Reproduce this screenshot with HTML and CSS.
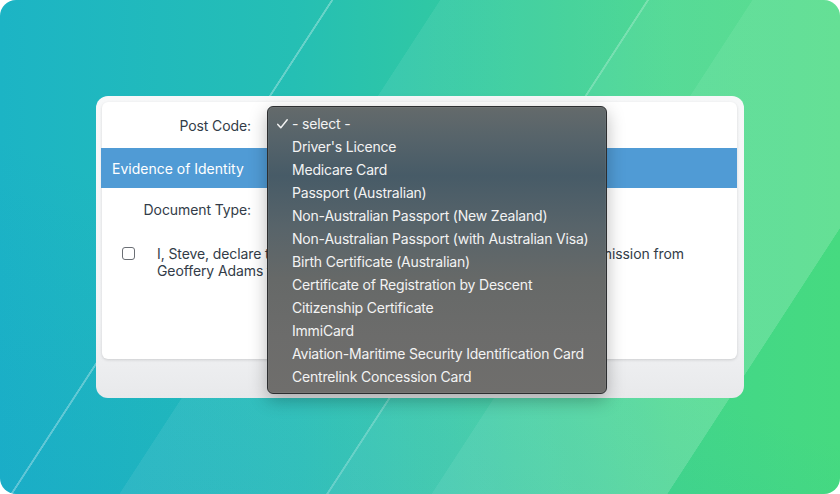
FILE: index.html
```html
<!DOCTYPE html>
<html>
<head>
<meta charset="utf-8">
<link rel="stylesheet" href="styles.css">
</head>
<body>
<div class="stage">
  <div class="panel">
    <div class="card">
      <div class="row row-post">
        <div class="label">Post Code:</div>
      </div>
      <div class="section-bar">Evidence of Identity</div>
      <div class="row row-doc">
        <div class="label">Document Type:</div>
      </div>
      <div class="declare">
        <span class="checkbox"></span>
        <p class="declare-text">I, Steve, declare that I have obtained the necessary consent and permission from<br>Geoffery Adams for these identity details to be verified.</p>
      </div>
      <ul class="menu">
        <li class="item selected"><svg class="check" width="11" height="10" viewBox="0 0 11 10"><path d="M0.8 5.4 L3.8 8.8 L10.2 0.8" fill="none" stroke="#f2f2f2" stroke-width="1.5" stroke-linecap="round" stroke-linejoin="round"/></svg>- select -</li>
        <li class="item">Driver's Licence</li>
        <li class="item">Medicare Card</li>
        <li class="item">Passport (Australian)</li>
        <li class="item">Non-Australian Passport (New Zealand)</li>
        <li class="item">Non-Australian Passport (with Australian Visa)</li>
        <li class="item">Birth Certificate (Australian)</li>
        <li class="item">Certificate of Registration by Descent</li>
        <li class="item">Citizenship Certificate</li>
        <li class="item">ImmiCard</li>
        <li class="item">Aviation-Maritime Security Identification Card</li>
        <li class="item">Centrelink Concession Card</li>
      </ul>
    </div>
  </div>
</div>
</body>
</html>
```
FILE: styles.css
```css
* { box-sizing: border-box; }
html, body { margin: 0; padding: 0; background: #ffffff; }
body { width: 840px; height: 494px; overflow: hidden; font-family: Inter, "Noto Sans", sans-serif; }

.stage {
  width: 840px;
  height: 494px;
  border-radius: 16px;
  overflow: hidden;
  padding: 96px 96px 0 96px;
  background:
    linear-gradient(123deg,
      rgba(255,255,255,0) 0%,
      rgba(255,255,255,0) 28.5%,
      rgba(255,255,255,0.3) 28.55%,
      rgba(255,255,255,0.3) 28.7%,
      rgba(255,255,255,0) 28.75%,
      rgba(255,255,255,0) 37.9%,
      rgba(255,255,255,0.07) 37.95%,
      rgba(255,255,255,0.07) 55.7%,
      rgba(255,255,255,0.3) 55.75%,
      rgba(255,255,255,0.3) 55.9%,
      rgba(255,255,255,0.11) 55.95%,
      rgba(255,255,255,0.11) 64.8%,
      rgba(255,255,255,0.17) 64.85%,
      rgba(255,255,255,0.17) 85.1%,
      rgba(255,255,255,0) 85.15%,
      rgba(255,255,255,0) 100%),
    linear-gradient(200deg, rgba(255,255,255,0) 55%, rgba(10,120,220,0.12) 100%),
    linear-gradient(90deg, #1cb4c5 0%, #25bfb4 35%, #35cc9c 60%, #42d68a 80%, #46da80 100%);
}

.panel {
  width: 648px;
  height: 302px;
  border-radius: 12px;
  background: linear-gradient(180deg, #f7f8f9 0%, #f3f4f6 75%, #e8e9eb 100%);
  padding: 6px 7px 0 6px;
}

.card {
  position: relative;
  height: 257px;
  background: #ffffff;
  border-radius: 6px;
  box-shadow: 0 1px 3px rgba(0,0,0,0.14);
  color: #333c48;
  font-size: 14px;
  letter-spacing: -0.1px;
}

.row {
  display: flex;
  align-items: center;
}
.row-post { height: 46px; }
.row-doc { height: 42px; }
.label {
  width: 149px;
  text-align: right;
}

.section-bar {
  height: 40px;
  margin-left: -1px;
  background: #509bd5;
  color: #ffffff;
  display: flex;
  align-items: center;
  padding-left: 11px;
  letter-spacing: 0;
}

.declare {
  display: flex;
  align-items: flex-start;
  padding: 15px 20px 0 20px;
}
.checkbox {
  flex: none;
  width: 13px;
  height: 13px;
  border: 1px solid #6b6f75;
  border-radius: 3px;
  margin-top: 2px;
  margin-right: 22px;
  background: #fff;
}
.declare-text {
  margin: 0;
  line-height: 17px;
  white-space: nowrap;
}

.menu {
  position: absolute;
  left: 165px;
  top: 4px;
  width: 340px;
  height: 288px;
  margin: 0;
  padding: 5px 0 0 0;
  list-style: none;
  border-radius: 6px;
  border: 1px solid #2c2e30;
  background: linear-gradient(180deg, #646a6b 0%, #55636a 12%, #475b67 24%, #58646a 42%, #666968 60%, #6c6c6b 80%, #6f6e6c 100%);
  box-shadow: 0 6px 18px rgba(0,0,0,0.28), inset 0 0 0 1px rgba(255,255,255,0.06);
  color: #f3f3f3;
  font-size: 14px;
  letter-spacing: -0.2px;
}
.item {
  height: 23px;
  line-height: 23px;
  padding-left: 24px;
  position: relative;
  white-space: nowrap;
}
.check {
  position: absolute;
  left: 9px;
  top: 7px;
}
```
